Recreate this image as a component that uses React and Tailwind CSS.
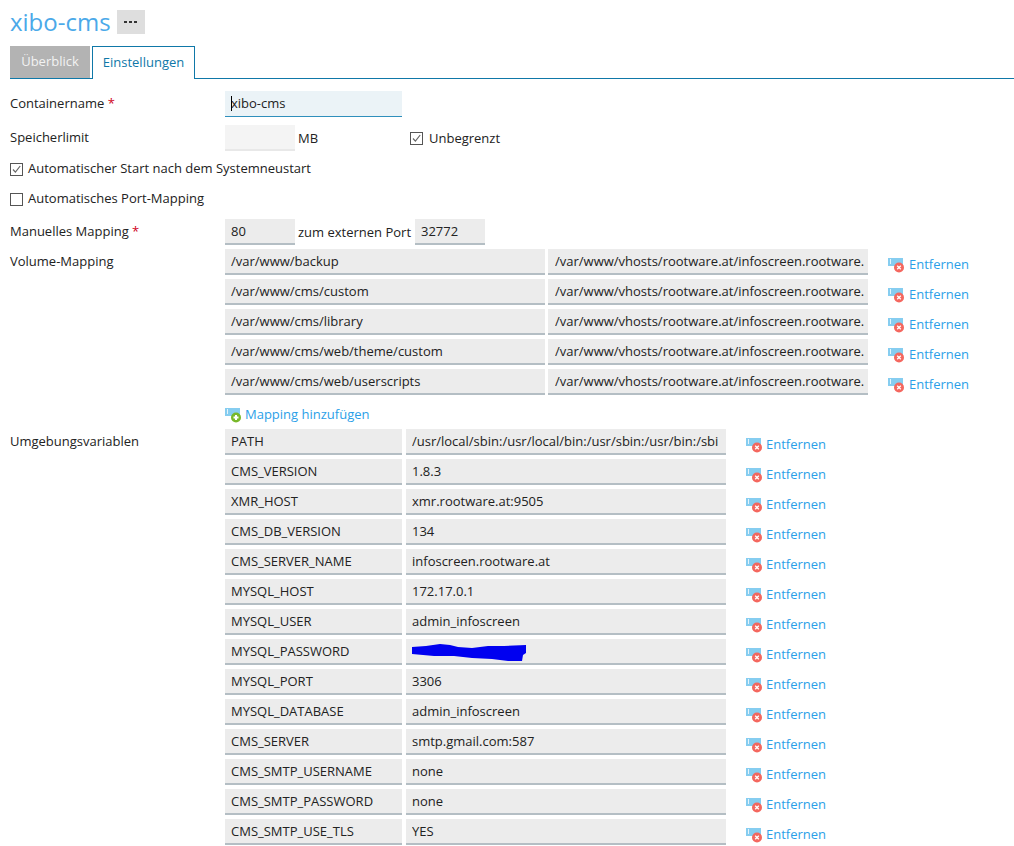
import React from "react";

const volumes = [
  "/var/www/backup",
  "/var/www/cms/custom",
  "/var/www/cms/library",
  "/var/www/cms/web/theme/custom",
  "/var/www/cms/web/userscripts",
];

const envVars = [
  ["PATH", "/usr/local/sbin:/usr/local/bin:/usr/sbin:/usr/bin:/sbi"],
  ["CMS_VERSION", "1.8.3"],
  ["XMR_HOST", "xmr.rootware.at:9505"],
  ["CMS_DB_VERSION", "134"],
  ["CMS_SERVER_NAME", "infoscreen.rootware.at"],
  ["MYSQL_HOST", "172.17.0.1"],
  ["MYSQL_USER", "admin_infoscreen"],
  ["MYSQL_PASSWORD", ""],
  ["MYSQL_PORT", "3306"],
  ["MYSQL_DATABASE", "admin_infoscreen"],
  ["CMS_SERVER", "smtp.gmail.com:587"],
  ["CMS_SMTP_USERNAME", "none"],
  ["CMS_SMTP_PASSWORD", "none"],
  ["CMS_SMTP_USE_TLS", "YES"],
];

const Field = ({ value, className }) => (
  <div className={"h-[26px] shrink-0 whitespace-nowrap bg-[#ececec] border-b-2 border-[#b4bec4] leading-[24px] text-[13px] text-[#222] " + className}>
    <div className="overflow-hidden">{value}</div>
  </div>
);

const MappingIcon = ({ add }) => (
  <svg width="17" height="15" viewBox="0 0 17 15" className="shrink-0">
    <rect x="0" y="0" width="15" height="8" fill="#86cdf0" />
    <rect x="2" y="1" width="1" height="5" fill="#e4f4fc" />
    {add ? (
      <g>
        <circle cx="11" cy="9.5" r="5" fill="#78b82a" />
        <rect x="8.5" y="8.5" width="5" height="2" fill="#fff" />
        <rect x="10" y="7" width="2" height="5" fill="#fff" />
      </g>
    ) : (
      <g>
        <circle cx="11" cy="9.5" r="5" fill="#f4675f" />
        <path d="M9.2 7.7l3.6 3.6M12.8 7.7l-3.6 3.6" stroke="#fff" strokeWidth="1.3" />
      </g>
    )}
  </svg>
);

const Remove = ({ className }) => (
  <div className={"flex items-center pt-[6px] text-[13px] text-[#2b9fe8] " + className}>
    <MappingIcon />
    <span>Entfernen</span>
  </div>
);

const Check = ({ checked }) => (
  <span className="flex h-[13px] w-[13px] shrink-0 items-center justify-center border border-[#555] bg-white">
    {checked && (
      <svg width="11" height="11" viewBox="0 0 11 11">
        <path d="M2 5.5l2.4 2.6L9.2 2" fill="none" stroke="#666" strokeWidth="1.2" />
      </svg>
    )}
  </span>
);

const Label = ({ children, required, className = "" }) => (
  <div className={"w-[215px] shrink-0 text-[13px] leading-[24px] text-[#222] " + className}>
    {children}
    {required && <span className="text-[#d0021b]"> *</span>}
  </div>
);

export default function App() {
  return (
    <div className="h-[846px] overflow-hidden bg-white pl-[10px] font-['Open_Sans',sans-serif]">
      <div className="flex h-[46px] items-start pt-[10px]">
        <h1 className="text-[24px] leading-[24px] text-[#4ba9e9]">xibo-cms</h1>
        <div className="ml-[6px] flex h-[24px] w-[28px] items-center justify-center gap-[2px] bg-[#dedede]">
          <span className="h-[2px] w-[3px] bg-[#333]" />
          <span className="h-[2px] w-[3px] bg-[#333]" />
          <span className="h-[2px] w-[3px] bg-[#333]" />
        </div>
      </div>

      <div className="flex h-[33px] items-end border-b border-[#0f78a8]">
        <div className="flex h-[32px] w-[80px] items-center justify-center bg-[#b3b3b3] text-[13px] text-[#f2f2f2]">
          Überblick
        </div>
        <div className="relative top-[1px] ml-[2px] flex h-[33px] w-[103px] items-center justify-center border border-b-0 border-[#0f78a8] bg-white text-[13px] text-[#0f78a8]">
          Einstellungen
        </div>
      </div>

      <div className="mt-[12px] flex h-[26px]">
        <Label required>Containername</Label>
        <div className="relative h-[26px] w-[177px] border-b border-[#2f8fbc] bg-[#ebf3f7] pl-[6px] text-[13px] leading-[24px] text-[#222]">
          xibo-cms
          <span className="absolute left-[6px] top-[5px] h-[15px] w-px bg-black" />
        </div>
      </div>

      <div className="mt-[8px] flex h-[26px] items-center">
        <Label className="-mt-[2px]">Speicherlimit</Label>
        <div className="h-[26px] w-[70px] border-b-2 border-[#e8e8e8] bg-[#f4f4f4]" />
        <span className="ml-[3px] w-[112px] pt-[2px] text-[13px] text-[#222]">MB</span>
        <Check checked />
        <span className="ml-[6px] pt-[2px] text-[13px] text-[#222]">Unbegrenzt</span>
      </div>

      <div className="mt-[9px] flex h-[18px] items-center gap-[5px] text-[13px] text-[#222]">
        <Check checked />
        <span>Automatischer Start nach dem Systemneustart</span>
      </div>

      <div className="mt-[12px] flex h-[18px] items-center gap-[5px] text-[13px] text-[#222]">
        <Check />
        <span>Automatisches Port-Mapping</span>
      </div>

      <div className="mt-[11px] flex h-[26px] items-center">
        <Label required className="-mt-[2px]">Manuelles Mapping</Label>
        <Field value="80" className="w-[70px] px-[6px]" />
        <span className="mx-[3px] w-[114px] pt-[2px] text-[13px] text-[#222]">zum externen Port</span>
        <Field value="32772" className="w-[70px] px-[6px]" />
      </div>

      <div className="mt-[4px] flex">
        <Label>Volume-Mapping</Label>
        <div className="flex flex-col gap-[4px]">
          {volumes.map((v) => (
            <div key={v} className="flex h-[26px]">
              <Field value={v} className="w-[320px] px-[6px]" />
              <Field value="/var/www/vhosts/rootware.at/infoscreen.rootware." className="ml-[3px] w-[320px] pl-[7px] pr-[3px]" />
              <Remove className="ml-[20px] gap-[4px]" />
            </div>
          ))}
          <div className="flex h-[26px] items-center gap-[3px] pt-[6px] text-[13px] text-[#2b9fe8]">
            <MappingIcon add />
            <span>Mapping hinzufügen</span>
          </div>
        </div>
      </div>

      <div className="mt-[4px] flex">
        <Label>Umgebungsvariablen</Label>
        <div className="flex flex-col gap-[4px]">
          {envVars.map(([name, value]) => (
            <div key={name} className="flex h-[26px]">
              <Field value={name} className="w-[177px] px-[6px]" />
              <div className="relative ml-[4px]">
                <Field value={value} className="w-[320px] px-[6px]" />
                {name === "MYSQL_PASSWORD" && (
                  <svg width="116" height="18" viewBox="0 0 116 18" className="absolute left-[6px] top-[5px]">
                    <path d="M0 3L14 2L28 0L38 1L46 3L60 4L76 2L92 2L114 1L114 9L111 11L110 17L96 17L80 15L60 14L42 12L22 12L0 10Z" fill="#0000f0" />
                  </svg>
                )}
              </div>
              <Remove className="ml-[20px] gap-[3px]" />
            </div>
          ))}
        </div>
      </div>
    </div>
  );
}
